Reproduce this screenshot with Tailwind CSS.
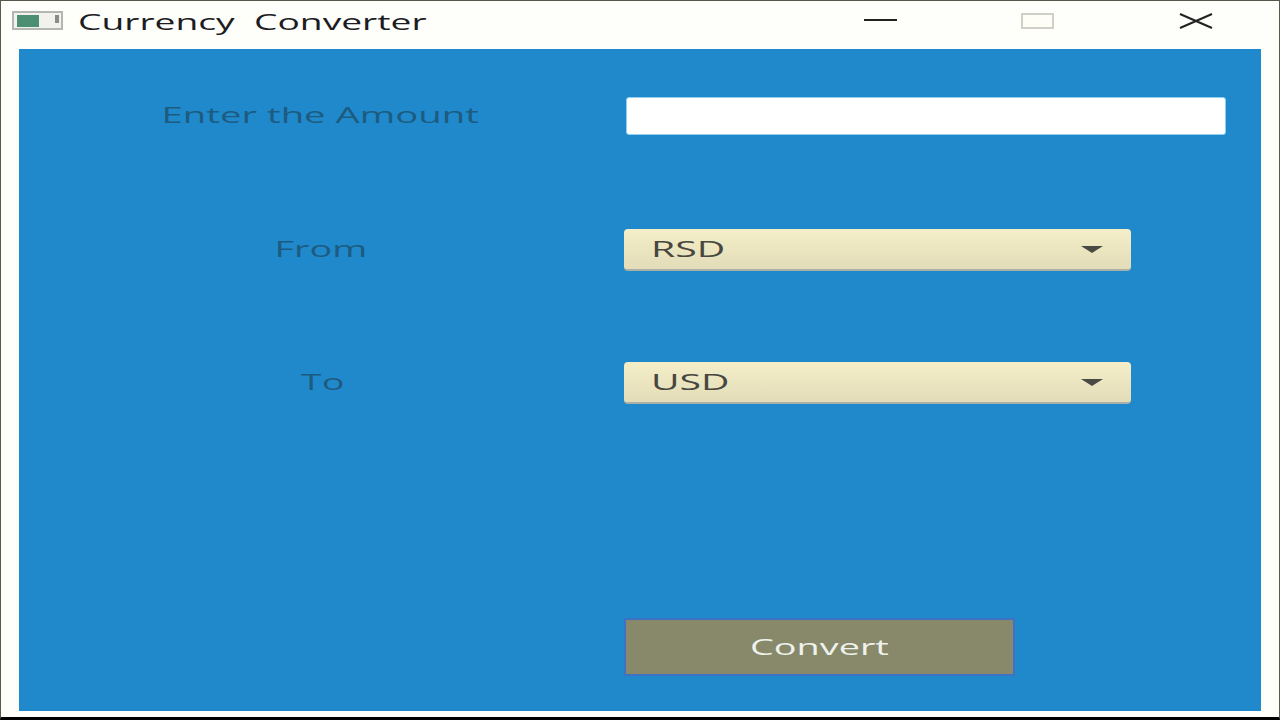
<!DOCTYPE html>
<html><head><meta charset="utf-8"><script src="https://cdn.jsdelivr.net/npm/@tailwindcss/browser@4"></script></head>
<body class="bg-white">
<div class="w-[1280px] h-[720px] overflow-hidden flex flex-col bg-[#fefefa] border-x border-t border-b-[3px] border-x-[#5a5a48] border-t-[#55554a] border-b-black font-['Open_Sans',sans-serif]">
  <div class="h-[48px] shrink-0 flex items-center pb-[8px] pl-[11px] pr-[66px]">
    <svg width="52" height="20" viewBox="0 0 52 20" class="shrink-0"><rect x="1" y="1" width="49" height="17" fill="#f1f2ee" stroke="#b4b7b1" stroke-width="2"/><rect x="5" y="4" width="22" height="12" fill="#4d8f72"/><rect x="43" y="4" width="4" height="8" fill="#8a8a88"/></svg>
    <span class="ml-[14px] inline-block origin-left scale-x-[1.69] text-[22px] text-[#1c1c22] whitespace-pre">Currency  Converter</span>
    <div class="ml-auto flex items-center">
      <svg width="34" height="16" viewBox="0 0 34 16" class="mr-[123px]"><path d="M0 7H33" stroke="#222" stroke-width="2"/></svg>
      <svg width="34" height="16" viewBox="0 0 34 16" class="mr-[124px]"><rect x="1" y="1" width="31" height="14" fill="#fefef6" stroke="#d0d0c6" stroke-width="2"/></svg>
      <svg width="34" height="16" viewBox="0 0 34 16"><path d="M1 1L33 15M33 1L1 15" stroke="#222" stroke-width="2"/></svg>
    </div>
  </div>
  <div class="mx-[18px] h-[662px] bg-[#2089cb] flex flex-col pt-[47px] pl-[22px] pr-[35px]">
    <div class="flex items-center h-[39px]">
      <div class="w-[558px] text-center"><span class="inline-block scale-x-[1.74] text-[22px] text-[#1d5c80] -translate-y-px">Enter the Amount</span></div>
      <div class="ml-[27px] flex-1 h-[38px] bg-white rounded-[3px] border border-[#8fd0ee]"></div>
    </div>
    <div class="flex items-center h-[42px] mt-[94px]">
      <div class="w-[560px] text-center"><span class="inline-block scale-x-[1.72] text-[22px] text-[#1d5c80] -translate-y-[2px]">From</span></div>
      <div class="ml-[23px] w-[507px] h-[42px] rounded-[4px] bg-gradient-to-b from-[#f4efc8] to-[#e2dcb8] border-b-2 border-b-[#a9b0a8] flex items-center pl-[27px] pr-[28px] text-[#47473f]"><span class="inline-block origin-left scale-x-[1.78] text-[22px] -translate-y-px">RSD</span><svg width="22" height="7" viewBox="0 0 22 7" class="ml-auto"><path d="M0 0H22L11 7Z" fill="#4a4a44"/></svg></div>
    </div>
    <div class="flex items-center h-[42px] mt-[91px]">
      <div class="w-[564px] text-center"><span class="inline-block scale-x-[1.72] text-[22px] text-[#1d5c80] -translate-y-[2px]">To</span></div>
      <div class="ml-[19px] w-[507px] h-[42px] rounded-[4px] bg-gradient-to-b from-[#f4efc8] to-[#e2dcb8] border-b-2 border-b-[#a9b0a8] flex items-center pl-[27px] pr-[28px] text-[#47473f]"><span class="inline-block origin-left scale-x-[1.78] text-[22px] -translate-y-px">USD</span><svg width="22" height="7" viewBox="0 0 22 7" class="ml-auto"><path d="M0 0H22L11 7Z" fill="#4a4a44"/></svg></div>
    </div>
    <div class="flex items-center h-[58px] mt-[214px]">
      <div class="w-[583px]"></div>
      <button class="w-[391px] h-[58px] bg-[#87896a] border-2 border-[#3d72c4] text-[#eef2ea]"><span class="inline-block scale-x-[1.72] text-[22px] -translate-y-px">Convert</span></button>
    </div>
  </div>
</div>
</body></html>
